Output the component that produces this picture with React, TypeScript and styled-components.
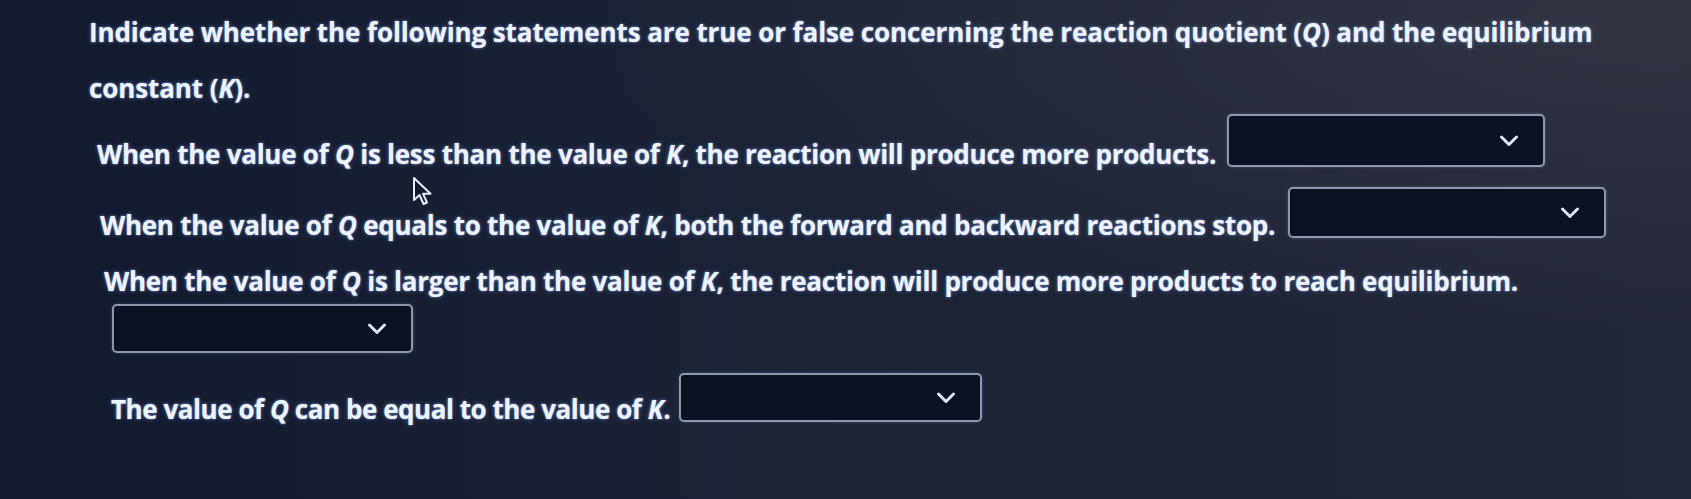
import React from "react";
import styled, { createGlobalStyle } from "styled-components";

const Global = createGlobalStyle`
  html, body { margin: 0; padding: 0; }
  body {
    width: 1691px;
    height: 499px;
    overflow: hidden;
    background: #191f30;
    font-family: "Open Sans", "Noto Sans", sans-serif;
  }
`;

const Page = styled.main`
  position: relative;
  box-sizing: border-box;
  width: 1691px;
  height: 499px;
  padding: 4px 0 0 89px;
  background:
    radial-gradient(ellipse at 95% 5%, rgba(60, 62, 72, 0.55) 0%, rgba(40, 44, 58, 0) 45%),
    linear-gradient(90deg, #131a2e 0%, #1a2134 35%, #1f2536 75%, #232838 100%);
  color: #eef4ff;
  font-weight: 700;
  font-size: 26px;
  letter-spacing: -0.25px;
  text-shadow: 0 0 2px rgba(170, 200, 255, 0.75), 0 0 5px rgba(120, 160, 255, 0.35);
`;

const Prompt = styled.p`
  margin: 0;
  line-height: 56px;
  letter-spacing: -0.1px;
  white-space: nowrap;
`;

const Statements = styled.div`
  display: flex;
  flex-direction: column;
  gap: 20px;
  margin-top: -2px;
`;

const Row = styled.div<{ $indent: number; $stacked?: boolean; $gap?: number }>`
  display: flex;
  flex-direction: ${(p) => (p.$stacked ? "column" : "row")};
  align-items: ${(p) => (p.$stacked ? "flex-start" : "flex-end")};
  gap: ${(p) => p.$gap ?? 11}px;
  padding-left: ${(p) => p.$indent}px;
  padding-top: ${(p) => (p.$stacked ? 10 : 0)}px;
`;

const Statement = styled.span<{ $spacing?: number }>`
  line-height: 1;
  white-space: nowrap;
  letter-spacing: ${(p) => p.$spacing ?? -0.25}px;
`;

const Var = styled.i`
  font-style: italic;
`;

const SelectBox = styled.div<{ $w: number; $h: number; $shift?: number }>`
  position: relative;
  box-sizing: border-box;
  width: ${(p) => p.$w}px;
  height: ${(p) => p.$h}px;
  margin-left: ${(p) => p.$shift ?? 0}px;
  flex-shrink: 0;
  background: #0c1121;
  border: 2px solid #8e98ab;
  border-radius: 5px;
  display: flex;
  align-items: center;
  justify-content: flex-end;
  padding-right: 24px;
  box-shadow: 0 0 3px rgba(150, 170, 220, 0.35);
`;

const Chevron = styled.svg`
  width: 20px;
  height: 12px;
  display: block;
`;

const Cursor = styled.svg`
  position: absolute;
  left: 412px;
  top: 176px;
  width: 22px;
  height: 31px;
`;

function Dropdown({ w, h = 52, shift }: { w: number; h?: number; shift?: number }) {
  return (
    <SelectBox $w={w} $h={h} $shift={shift} role="combobox" aria-expanded="false">
      <Chevron viewBox="0 0 20 12" fill="none">
        <path d="M2.5 2 L10 9.5 L17.5 2" stroke="#dde4f2" strokeWidth="3" strokeLinecap="round" strokeLinejoin="round" />
      </Chevron>
    </SelectBox>
  );
}

export default function App() {
  return (
    <>
      <Global />
      <Page>
        <Prompt>
          Indicate whether the following statements are true or false concerning the reaction quotient (<Var>Q</Var>) and the equilibrium
          <br />
          constant (<Var>K</Var>).
        </Prompt>
        <Statements>
          <Row $indent={8}>
            <Statement>
              When the value of <Var>Q</Var> is less than the value of <Var>K</Var>, the reaction will produce more products.
            </Statement>
            <Dropdown w={318} h={53} />
          </Row>
          <Row $indent={11} $gap={13}>
            <Statement>
              When the value of <Var>Q</Var> equals to the value of <Var>K</Var>, both the forward and backward reactions stop.
            </Statement>
            <Dropdown w={318} h={51} />
          </Row>
          <Row $indent={15} $stacked $gap={10}>
            <Statement>
              When the value of <Var>Q</Var> is larger than the value of <Var>K</Var>, the reaction will produce more products to reach equilibrium.
            </Statement>
            <Dropdown w={301} h={49} shift={8} />
          </Row>
          <Row $indent={22} $gap={9}>
            <Statement $spacing={-0.45}>
              The value of <Var>Q</Var> can be equal to the value of <Var>K</Var>.
            </Statement>
            <Dropdown w={303} h={49} />
          </Row>
        </Statements>
        <Cursor viewBox="0 0 22 31" fill="none">
          <path
            d="M2 2 L2 24 L7.5 19 L11.5 28 L15 26.5 L11 17.8 L18.5 17.8 Z"
            fill="#141a2c"
            stroke="#e8eefc"
            strokeWidth="2"
            strokeLinejoin="round"
          />
        </Cursor>
      </Page>
    </>
  );
}
